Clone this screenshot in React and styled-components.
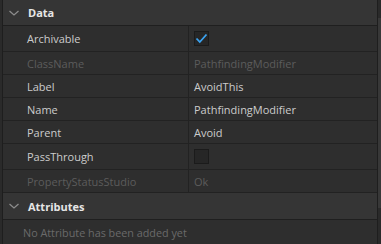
import React from "react"
import styled, { createGlobalStyle } from "styled-components"

const GlobalStyle = createGlobalStyle`
    html, body {
        margin: 0;
        padding: 0;
        background: #2e2e2e;
        overflow: hidden;
    }
    body {
        font-family: "Open Sans", "Noto Sans", "Liberation Sans", sans-serif;
        -webkit-font-smoothing: antialiased;
    }
`

const StyledFrame = styled.div`
    display: flex;
    width: 381px;
    height: 244px;
    background: #2e2e2e;
    overflow: hidden;
`

const StyledGutter = styled.div`
    width: 2px;
    background: #2a2a2a;
    border-right: 1px solid #1e1e1e;
    flex-shrink: 0;
`

const StyledPanel = styled.div`
    flex: 1;
    display: flex;
    flex-direction: column;
    border-right: 1px solid #1e1e1e;
`

const StyledScrollbar = styled.div`
    width: 3px;
    flex-shrink: 0;
    background: #2a2a2a;
    display: flex;
    flex-direction: column;
    padding-top: 18px;
    div {
        height: 190px;
        background: #383838;
    }
`

const StyledSection = styled.div`
    display: flex;
    align-items: center;
    height: ${({ h }) => h}px;
    box-sizing: border-box;
    background: #353535;
    border-bottom: 1px solid #1f1f1f;
    padding-left: 5px;
    gap: 8px;
    span {
        color: #e6e6e6;
        font-size: 11px;
        font-weight: 700;
    }
`

const StyledRow = styled.div`
    display: grid;
    grid-template-columns: 186px 1fr;
    height: ${({ h }) => h}px;
    box-sizing: border-box;
    border-bottom: 1px solid #222222;
    font-size: 11px;
`

const StyledName = styled.div`
    display: flex;
    align-items: center;
    padding-left: 24px;
    border-right: 1px solid #222222;
    color: ${({ disabled }) => (disabled ? "#5c5c5c" : "#cccccc")};
    white-space: nowrap;
`

const StyledValue = styled.div`
    display: flex;
    align-items: center;
    padding-left: 5px;
    color: ${({ disabled }) => (disabled ? "#5c5c5c" : "#cccccc")};
    white-space: nowrap;
`

const StyledCheckbox = styled.div`
    width: 15px;
    height: 15px;
    box-sizing: border-box;
    background: #262626;
    border: 1px solid #1b1b1b;
    display: flex;
    align-items: center;
    justify-content: center;
`

const StyledEmpty = styled.div`
    display: flex;
    align-items: center;
    flex: 1;
    padding-left: 20px;
    color: #6a6a6a;
    font-size: 10.8px;
`

const properties = [
    { name: "Archivable", check: true },
    { name: "ClassName", value: "PathfindingModifier", disabled: true },
    { name: "Label", value: "AvoidThis" },
    { name: "Name", value: "PathfindingModifier" },
    { name: "Parent", value: "Avoid" },
    { name: "PassThrough", check: false },
    { name: "PropertyStatusStudio", value: "Ok", disabled: true },
]

function Chevron() {
    return (
        <svg width="12" height="8" viewBox="0 0 12 8">
            <path d="M1.5 2 L6 6 L10.5 2" fill="none" stroke="#8c8c8c" strokeWidth="1.3" />
        </svg>
    )
}

function Check() {
    return (
        <svg width="13" height="11" viewBox="0 0 13 11">
            <path d="M1.5 5.5 L4.8 9 L11.5 1.5" fill="none" stroke="#3ba4f2" strokeWidth="1.8" />
        </svg>
    )
}

function PropertyRow({ prop }) {
    const isCheck = prop.check !== undefined
    return (
        <StyledRow h={isCheck ? 26 : 23}>
            <StyledName disabled={prop.disabled}>{prop.name}</StyledName>
            <StyledValue disabled={prop.disabled}>
                {isCheck ? (
                    <StyledCheckbox>{prop.check && <Check />}</StyledCheckbox>
                ) : (
                    prop.value
                )}
            </StyledValue>
        </StyledRow>
    )
}

export default function App() {
    return (
        <StyledFrame>
            <GlobalStyle />
            <StyledGutter />
            <StyledPanel>
                <StyledSection h={26}>
                    <Chevron />
                    <span>Data</span>
                </StyledSection>
                {properties.map(p => <PropertyRow key={p.name} prop={p} />)}
                <StyledSection h={27}>
                    <Chevron />
                    <span>Attributes</span>
                </StyledSection>
                <StyledEmpty>No Attribute has been added yet</StyledEmpty>
            </StyledPanel>
            <StyledScrollbar>
                <div />
            </StyledScrollbar>
        </StyledFrame>
    )
}
